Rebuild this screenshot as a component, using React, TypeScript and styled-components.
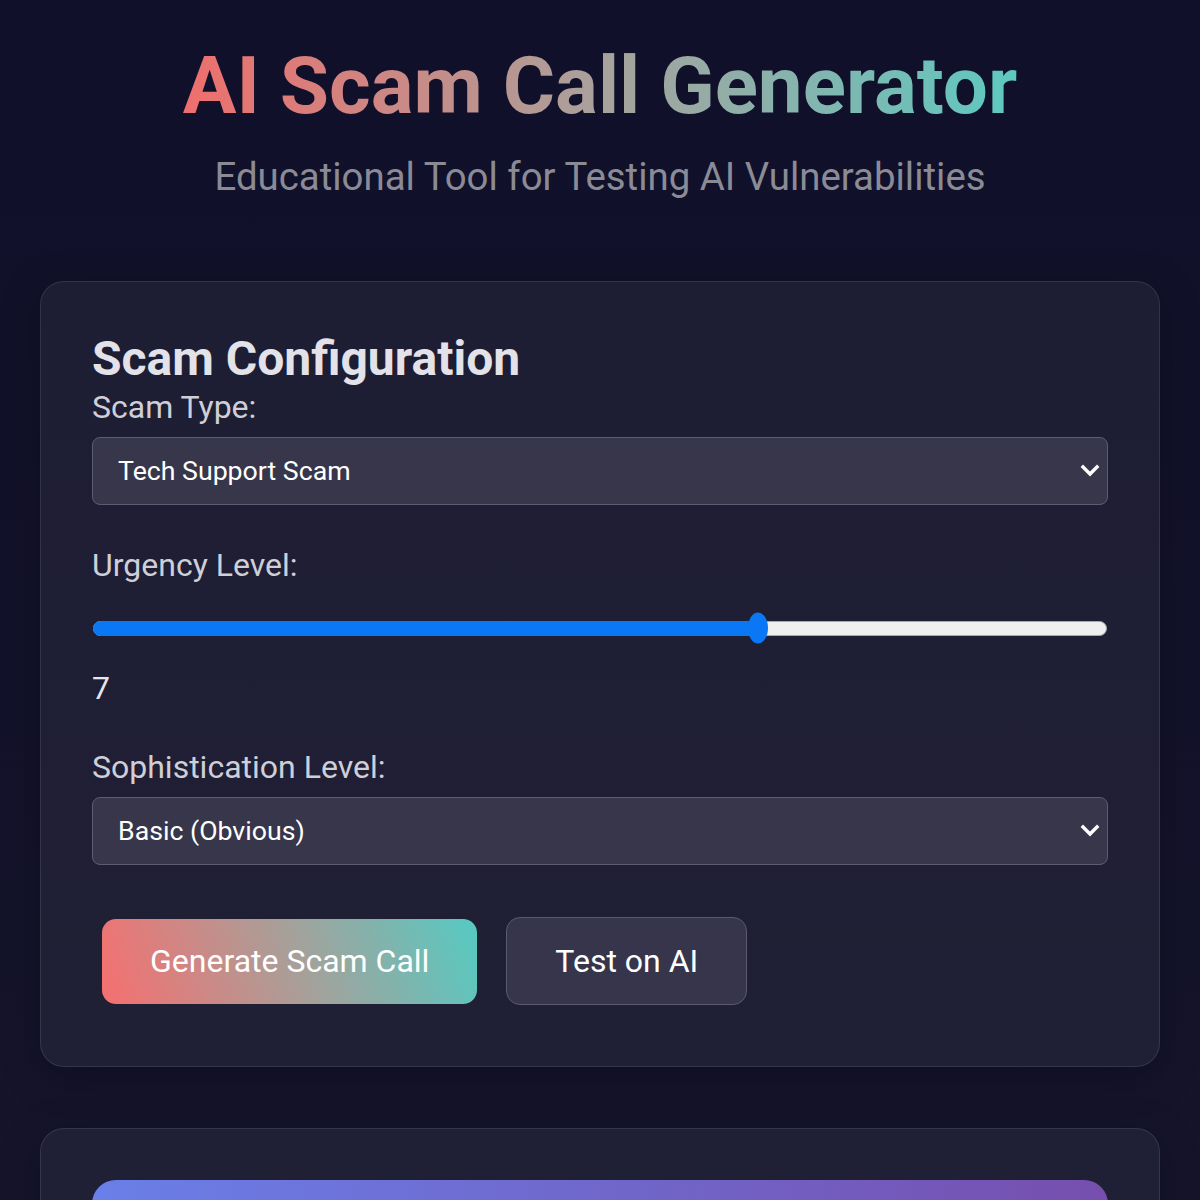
import React, { useState } from 'react';
import styled, { createGlobalStyle } from 'styled-components';

const GlobalStyle = createGlobalStyle`
  html, body {
    margin: 0;
    padding: 0;
  }

  body {
    background: linear-gradient(180deg, #10102a 0%, #15142b 100%);
    min-height: 1200px;
    font-family: Roboto, "Liberation Sans", sans-serif;
    color: #e4e4ea;
  }

  * {
    box-sizing: border-box;
  }
`;

const Page = styled.main`
  max-width: 1120px;
  margin: 0 auto;
  padding-top: 38px;
`;

const Header = styled.header`
  text-align: center;
  margin-bottom: 81px;
`;

const Title = styled.h1`
  margin: 0;
  font-size: 80px;
  font-weight: 700;
  line-height: 1.2;
  background: linear-gradient(90deg, #ee6f6d 0%, #a9a19c 50%, #5ec9c1 100%);
  -webkit-background-clip: text;
  background-clip: text;
  color: transparent;
  display: inline-block;
`;

const Subtitle = styled.p`
  margin: 20px 0 0;
  font-size: 38.4px;
  line-height: 1.2;
  color: #8b8b96;
`;

const Card = styled.section`
  background: rgba(255, 255, 255, 0.05);
  border: 1px solid rgba(255, 255, 255, 0.1);
  border-radius: 24px;
  padding: 51px;
  margin-bottom: 61px;
  box-shadow: 0 10px 40px rgba(0, 0, 0, 0.25);
`;

const CardTitle = styled.h2`
  margin: 0 0 2px;
  font-size: 48px;
  font-weight: 700;
  line-height: 1.1;
  color: #e2e2e8;
`;

const Field = styled.div<{ $gap?: number }>`
  margin-bottom: ${(p) => p.$gap ?? 41}px;
`;

const Label = styled.label`
  display: block;
  font-size: 32px;
  font-weight: 400;
  line-height: 1.2;
  color: #cfcfd8;
  margin-bottom: 11px;
`;

const SelectWrap = styled.div`
  position: relative;
`;

const Select = styled.select`
  appearance: none;
  -webkit-appearance: none;
  width: 100%;
  height: 68px;
  padding: 0 60px 0 25px;
  background: #37364a;
  border: 1px solid #5d5c72;
  border-radius: 8px;
  color: #ffffff;
  font-family: Roboto, "Liberation Sans", sans-serif;
  font-size: 26.7px;
  outline: none;
`;

const Chevron = styled.svg`
  position: absolute;
  right: 8px;
  top: 50%;
  transform: translateY(-50%);
  pointer-events: none;
`;

const SliderTrack = styled.div`
  position: relative;
  height: 15px;
  margin: 36px 1px 33px;
  border-radius: 8px;
  background: #efefef;
  border: 1px solid #a8a8a8;
`;

const SliderFill = styled.div`
  height: 15px;
  margin: -1px 0 0 -1px;
  border-radius: 8px 0 0 8px;
  background: #0a78f5;
`;

const Thumb = styled.div`
  position: absolute;
  top: 50%;
  width: 20px;
  height: 31px;
  margin-left: -10px;
  transform: translateY(-50%);
  border-radius: 50%;
  background: #0a78f5;
`;

const Value = styled.div`
  font-size: 32px;
  font-weight: 400;
  line-height: 1.2;
  color: #e6e6ec;
`;

const Actions = styled.div`
  display: flex;
  gap: 29px;
  align-items: center;
  margin: 52px 0 10px;
`;

const Button = styled.button<{ $primary?: boolean }>`
  height: ${(p) => (p.$primary ? 85 : 88)}px;
  padding: 0 48px;
  margin-left: ${(p) => (p.$primary ? 10 : 0)}px;
  border-radius: 14px;
  font-family: Roboto, "Liberation Sans", sans-serif;
  font-size: 32px;
  color: #ffffff;
  cursor: pointer;
  border: ${(p) => (p.$primary ? 'none' : '1px solid #5a596e')};
  background: ${(p) =>
    p.$primary
      ? 'linear-gradient(70deg, #f66f6f 0%, #aa9e98 50%, #55cac2 100%)'
      : '#36354b'};
`;

const ResultCard = styled(Card)`
  padding-bottom: 0;
  margin-bottom: 0;
  height: 120px;
  overflow: hidden;
`;

const Banner = styled.div`
  height: 120px;
  border-radius: 24px;
  background: linear-gradient(90deg, #6a7fe8 0%, #764fae 100%);
`;

const scamTypes = [
  'Tech Support Scam',
  'IRS / Tax Scam',
  'Bank Fraud Alert',
  'Grandparent Scam',
];

const levels = ['Basic (Obvious)', 'Intermediate', 'Advanced (Convincing)'];

function ChevronIcon() {
  return (
    <Chevron width="20" height="14" viewBox="0 0 20 14">
      <path d="M3 3 L10 10 L17 3" fill="none" stroke="#fff" strokeWidth="3.4" strokeLinecap="square" />
    </Chevron>
  );
}

export default function App() {
  const [urgency] = useState(7);
  const min = 1;
  const max = 10;
  const pct = ((urgency - min) / (max - min)) * 98.4;

  return (
    <>
      <GlobalStyle />
      <Page>
        <Header>
          <Title>AI Scam Call Generator</Title>
          <Subtitle>Educational Tool for Testing AI Vulnerabilities</Subtitle>
        </Header>

        <Card>
          <CardTitle>Scam Configuration</CardTitle>
          <Field>
            <Label>Scam Type:</Label>
            <SelectWrap>
              <Select defaultValue={scamTypes[0]}>
                {scamTypes.map((t) => (
                  <option key={t}>{t}</option>
                ))}
              </Select>
              <ChevronIcon />
            </SelectWrap>
          </Field>

          <Field>
            <Label>Urgency Level:</Label>
            <SliderTrack>
              <SliderFill style={{ width: `${pct}%` }} />
              <Thumb style={{ left: `${pct}%` }} />
            </SliderTrack>
            <Value>{urgency}</Value>
          </Field>

          <Field $gap={0}>
            <Label>Sophistication Level:</Label>
            <SelectWrap>
              <Select defaultValue={levels[0]}>
                {levels.map((l) => (
                  <option key={l}>{l}</option>
                ))}
              </Select>
              <ChevronIcon />
            </SelectWrap>
          </Field>

          <Actions>
            <Button $primary>Generate Scam Call</Button>
            <Button>Test on AI</Button>
          </Actions>
        </Card>

        <ResultCard>
          <Banner />
        </ResultCard>
      </Page>
    </>
  );
}
